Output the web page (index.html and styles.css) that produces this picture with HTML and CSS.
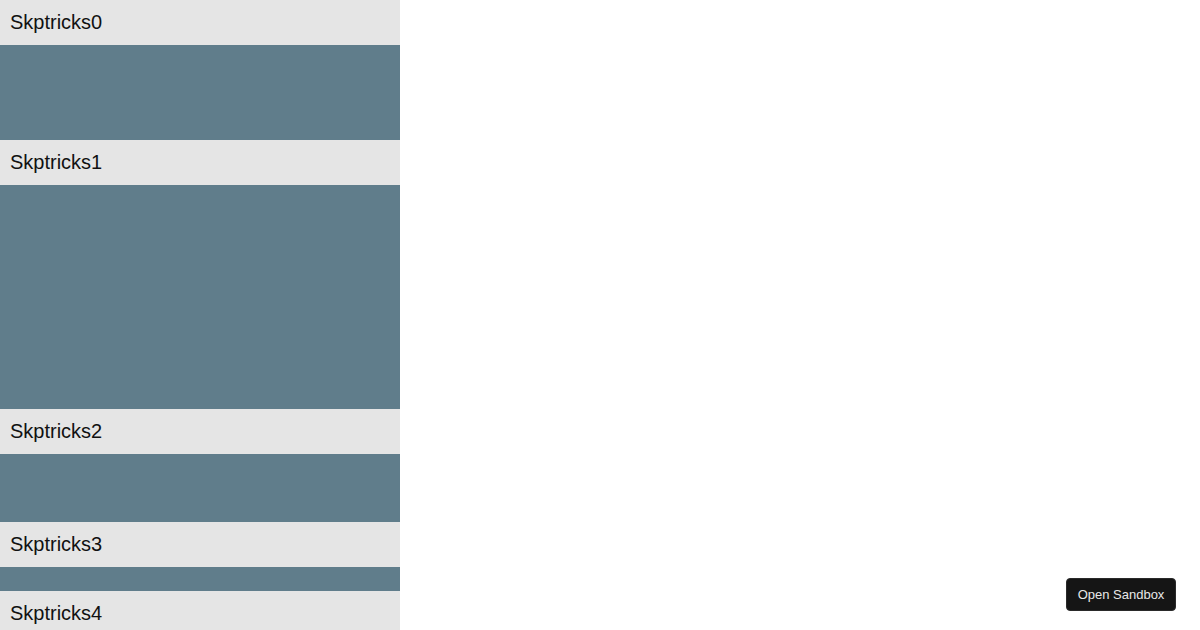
FILE: index.html
```html
<!DOCTYPE html>
<html>
<head>
<meta charset="utf-8">
<link rel="stylesheet" href="styles.css">
</head>
<body>
<div class="list">
  <div class="item"><div class="title">Skptricks0</div><div class="panel" style="height:95px"></div></div>
  <div class="item"><div class="title">Skptricks1</div><div class="panel" style="height:224px"></div></div>
  <div class="item"><div class="title">Skptricks2</div><div class="panel" style="height:68px"></div></div>
  <div class="item"><div class="title">Skptricks3</div><div class="panel" style="height:24px"></div></div>
  <div class="item"><div class="title">Skptricks4</div><div class="panel" style="height:60px"></div></div>
</div>
<a class="sandbox">Open Sandbox</a>
</body>
</html>
```
FILE: styles.css
```css
html, body {
  margin: 0;
  padding: 0;
  background: #ffffff;
  overflow: hidden;
}
body {
  font-family: "Liberation Sans", Arial, sans-serif;
}
.list {
  width: 400px;
  display: flex;
  flex-direction: column;
}
.title {
  box-sizing: border-box;
  height: 45px;
  padding: 11px 10px;
  font-size: 20px;
  line-height: 23px;
  color: #111;
  background: #e5e5e5;
}
.panel {
  background: #607d8b;
}
.sandbox {
  position: fixed;
  right: 24px;
  bottom: 19px;
  width: 110px;
  height: 33px;
  box-sizing: border-box;
  display: flex;
  align-items: center;
  justify-content: center;
  background: #151515;
  color: #e8e8e8;
  border-radius: 4px;
  font-family: "Liberation Sans", Arial, sans-serif;
  font-size: 13px;
  border: 1px solid #2a2a2a;
}
```
